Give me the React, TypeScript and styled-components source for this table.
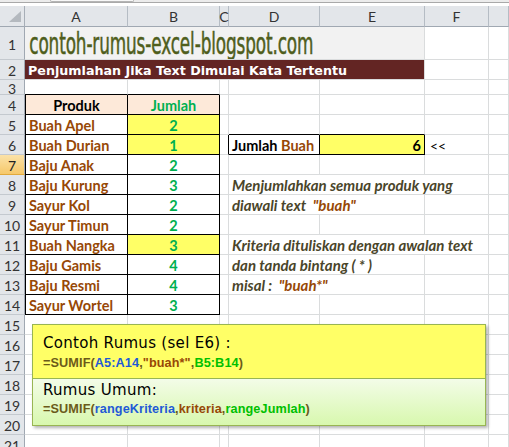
import React from "react";
import styled, { createGlobalStyle, css } from "styled-components";

const Global = createGlobalStyle`
  html, body { margin: 0; padding: 0; background: #fff; overflow: hidden; }
  body { font-family: Lato, "Open Sans", sans-serif; }
  * { box-sizing: border-box; }
`;

const GRID = "#dadcdd";
const BLACK = "#000";
const PEACH = "#fde9d9";
const YELLOW = "#ffff66";
const BROWN = "#974806";
const GREEN = "#00b050";
const HEAD_BG = "#e3e6ea";

const Page = styled.div`
  position: relative;
  width: 509px;
  height: 447px;
  overflow: hidden;
  background: #fff;
`;

const ScrollStrip = styled.div`
  height: 6px;
  background: #fff;
`;

const Track = styled.div`
  height: 3px;
  background: #ececec;
  border-bottom: 1px solid #a9a9a9;
  display: flex;
`;

const Thumb = styled.div`
  margin-left: 50px;
  width: 84px;
  height: 2px;
  background: #f7f7f7;
  border: 1px solid #b5b5b5;
  border-top: none;
  border-radius: 0 0 3px 3px;
`;

const Sheet = styled.div`
  display: grid;
  grid-template-columns: 25px 103px 92px 9px 91px 105px 64px 1fr;
  grid-template-rows: 21px 33px 20px 15px repeat(18, 20px);
`;

const headerText = css`
  font-family: Lato, sans-serif;
  font-size: 14px;
  color: #333;
  display: flex;
  align-items: center;
  justify-content: center;
  background: ${HEAD_BG};
`;

const Corner = styled.div`
  ${headerText};
  border-right: 1px solid #a7aeb7;
  border-bottom: 1px solid #a0a8b2;
  justify-content: flex-end;
  align-items: flex-end;
  padding: 0 3px 4px 0;
`;

const ColHead = styled.div`
  ${headerText};
  border-right: 1px solid #b5bcc4;
  border-bottom: 1px solid #a0a8b2;
`;

const RowHead = styled.div<{ $active?: boolean }>`
  ${headerText};
  border-right: 1px solid #a0a8b2;
  border-bottom: 1px solid #c4c9cf;
  padding-top: 2px;
  ${(p) =>
    p.$active &&
    css`
      background: linear-gradient(#fbe2a8, #f6c86a);
      border-bottom-color: #e1a93c;
      color: #222;
    `}
`;

type Align = "left" | "center" | "right";

const Cell = styled.div<{
  $span?: number;
  $bg?: string;
  $r?: boolean;
  $b?: boolean;
  $l?: boolean;
  $align?: Align;
}>`
  grid-column: span ${(p) => p.$span ?? 1};
  min-width: 0;
  background: ${(p) => p.$bg ?? "#fff"};
  border-right: 1px solid ${(p) => (p.$r ? BLACK : GRID)};
  border-bottom: 1px solid ${(p) => (p.$b ? BLACK : GRID)};
  border-left: ${(p) => (p.$l ? `1px solid ${BLACK}` : "none")};
  display: flex;
  align-items: center;
  justify-content: ${(p) =>
    p.$align === "center" ? "center" : p.$align === "right" ? "flex-end" : "flex-start"};
  padding: 1px 3px 0;
  white-space: nowrap;
  overflow: hidden;
`;

const Title = styled.span`
  display: inline-block;
  font-family: "DejaVu Sans Condensed", "DejaVu Sans", sans-serif;
  font-size: 30px;
  color: #4f5e1c;
  -webkit-text-stroke: 0.5px #4f5e1c;
  transform: scaleX(0.625);
  transform-origin: left center;
  padding-left: 2px;
  letter-spacing: -0.2px;
`;

const Banner = styled.span`
  font-family: "DejaVu Sans", sans-serif;
  font-weight: bold;
  font-size: 12.7px;
  color: #fff;
`;

const Bold = styled.span<{ $color?: string }>`
  font-family: Lato, sans-serif;
  font-weight: bold;
  font-size: 14.5px;
  color: ${(p) => p.$color ?? "#000"};
`;

const Plain = styled.span`
  font-family: Lato, sans-serif;
  font-size: 14px;
  color: #000;
  padding-left: 2px;
`;

const Note = styled.span`
  font-family: Lato, sans-serif;
  font-style: italic;
  font-weight: bold;
  font-size: 15px;
  color: #4a452a;
  white-space: pre;
`;

const Accent = styled.span`
  color: ${BROWN};
`;

const Callout = styled.div`
  position: absolute;
  left: 32px;
  top: 324px;
  width: 454px;
  display: flex;
  flex-direction: column;
  box-shadow: 2px 2px 3px rgba(0, 0, 0, 0.3);
`;

const Panel = styled.div<{ $tone: "yellow" | "green" }>`
  border: 1px solid #98b553;
  display: flex;
  flex-direction: column;
  padding-left: 10px;
  ${(p) =>
    p.$tone === "yellow"
      ? css`
          height: 55px;
          background: ${YELLOW};
          padding-top: 9px;
          gap: 2px;
        `
      : css`
          height: 47px;
          border-top: none;
          background: linear-gradient(#f3fce8, #d8f8ae);
          padding-top: 2px;
          gap: 1px;
        `}
`;

const PanelTitle = styled.div`
  font-family: "DejaVu Sans", sans-serif;
  font-size: 15px;
  letter-spacing: 0.3px;
  line-height: 18px;
  color: #000;
`;

const Formula = styled.div`
  font-family: "Liberation Sans", Arial, sans-serif;
  font-weight: bold;
  font-size: 12.7px;
  letter-spacing: 0.1px;
  line-height: 18px;
  color: #6b5a1a;
`;

const Tok = styled.span<{ $c: string }>`
  color: ${(p) => p.$c};
`;

type Spec = {
  span?: number;
  bg?: string;
  r?: boolean;
  b?: boolean;
  l?: boolean;
  align?: Align;
  content?: React.ReactNode;
};

type RowDef = { n: number; active?: boolean; cells: Spec[] };

const E: Spec = {};
const blanks = (k: number): Spec[] => Array.from({ length: k }, () => ({}));

const products: [string, number, boolean][] = [
  ["Buah Apel", 2, true],
  ["Buah Durian", 1, true],
  ["Baju Anak", 2, false],
  ["Baju Kurung", 3, false],
  ["Sayur Kol", 2, false],
  ["Sayur Timun", 2, false],
  ["Buah Nangka", 3, true],
  ["Baju Gamis", 4, false],
  ["Baju Resmi", 4, false],
  ["Sayur Wortel", 3, false],
];

const extra: Record<number, Spec[]> = {
  5: [E, { b: true }, { b: true }, E, E],
  6: [
    { r: true },
    {
      r: true,
      b: true,
      content: (
        <Bold>
          Jumlah <Accent>Buah</Accent>
        </Bold>
      ),
    },
    { r: true, b: true, bg: YELLOW, align: "right", content: <Bold>6</Bold> },
    { content: <Plain>&lt;&lt;</Plain> },
    E,
  ],
  8: [E, { span: 3, content: <Note>Menjumlahkan semua produk yang</Note> }, E],
  9: [
    E,
    {
      span: 2,
      content: (
        <Note>
          diawali text  <Accent>"buah"</Accent>
        </Note>
      ),
    },
    E,
    E,
  ],
  11: [E, { span: 3, content: <Note>Kriteria dituliskan dengan awalan text</Note> }, E],
  12: [E, { span: 2, content: <Note>dan tanda bintang ( * )</Note> }, E, E],
  13: [
    E,
    {
      span: 2,
      content: (
        <Note>
          misal :  <Accent>"buah*"</Accent>
        </Note>
      ),
    },
    E,
    E,
  ],
};

const rows: RowDef[] = [
  {
    n: 1,
    cells: [
      { span: 5, bg: "#f2f2f2", content: <Title>contoh-rumus-excel-blogspot.com</Title> },
      E,
      E,
    ],
  },
  {
    n: 2,
    cells: [
      {
        span: 5,
        bg: "#632523",
        content: <Banner>Penjumlahan Jika Text Dimulai Kata Tertentu</Banner>,
      },
      E,
      E,
    ],
  },
  { n: 3, cells: [{ b: true }, { b: true }, ...blanks(5)] },
  {
    n: 4,
    cells: [
      { l: true, r: true, b: true, bg: PEACH, align: "center", content: <Bold>Produk</Bold> },
      { r: true, b: true, bg: PEACH, align: "center", content: <Bold $color={GREEN}>Jumlah</Bold> },
      ...blanks(5),
    ],
  },
  ...products.map(([name, qty, hi], i): RowDef => {
    const n = 5 + i;
    return {
      n,
      active: n === 7,
      cells: [
        { l: true, r: true, b: true, content: <Bold $color={BROWN}>{name}</Bold> },
        {
          r: true,
          b: true,
          bg: hi ? YELLOW : undefined,
          align: "center",
          content: <Bold $color={GREEN}>{qty}</Bold>,
        },
        ...(extra[n] ?? blanks(5)),
      ],
    };
  }),
  ...Array.from({ length: 7 }, (_, i): RowDef => ({ n: 15 + i, cells: blanks(7) })),
];

const cols = ["A", "B", "C", "D", "E", "F", ""];

export default function App() {
  return (
    <Page>
      <Global />
      <ScrollStrip>
        <Track>
          <Thumb />
        </Track>
      </ScrollStrip>
      <Sheet>
        <Corner>
          <svg width="12" height="11" viewBox="0 0 12 11">
            <path d="M12 0 L12 11 L0 11 Z" fill="#b4b9bf" />
          </svg>
        </Corner>
        {cols.map((c, i) => (
          <ColHead key={i}>{c}</ColHead>
        ))}
        {rows.map((row) => (
          <React.Fragment key={row.n}>
            <RowHead $active={row.active}>{row.n}</RowHead>
            {row.cells.map((c, j) => (
              <Cell
                key={j}
                $span={c.span}
                $bg={c.bg}
                $r={c.r}
                $b={c.b}
                $l={c.l}
                $align={c.align}
              >
                {c.content}
              </Cell>
            ))}
          </React.Fragment>
        ))}
      </Sheet>
      <Callout>
        <Panel $tone="yellow">
          <PanelTitle>Contoh Rumus (sel E6) :</PanelTitle>
          <Formula>
            =SUMIF(<Tok $c="#1f5ad6">A5:A14</Tok>,<Tok $c={BROWN}>"buah*"</Tok>,
            <Tok $c="#00c000">B5:B14</Tok>)
          </Formula>
        </Panel>
        <Panel $tone="green">
          <PanelTitle>Rumus Umum:</PanelTitle>
          <Formula>
            =SUMIF(<Tok $c="#1f5ad6">rangeKriteria</Tok>,<Tok $c={BROWN}>kriteria</Tok>,
            <Tok $c="#00c000">rangeJumlah</Tok>)
          </Formula>
        </Panel>
      </Callout>
    </Page>
  );
}
